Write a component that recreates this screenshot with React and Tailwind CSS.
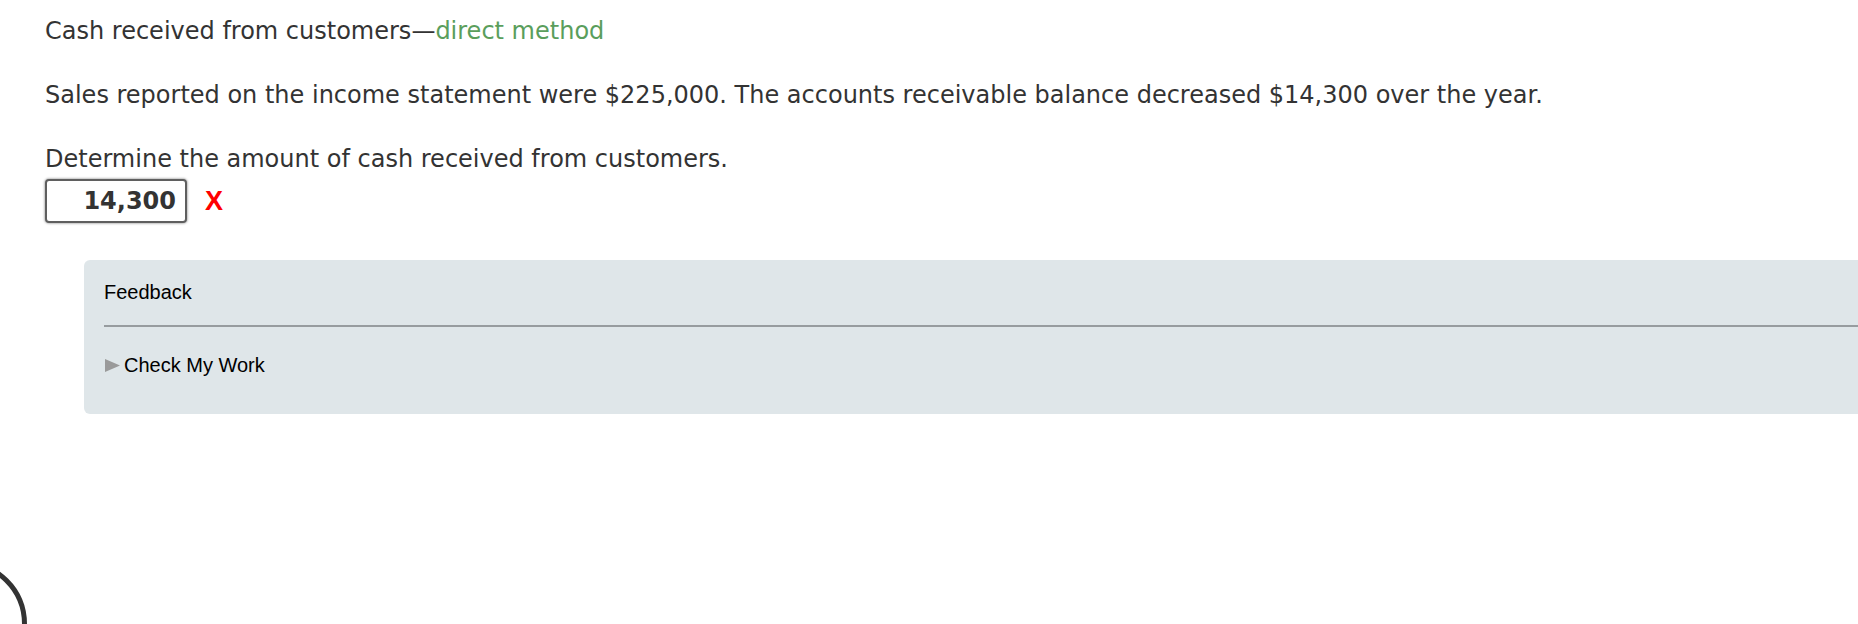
import React from 'react';

const Feedback = () => (
  <div className="ml-[39px] mt-[37px] w-[1800px] shrink-0 rounded-[6px] bg-[#dfe6e9] pl-5 pr-5 pt-[21px] pb-[37px] font-['Liberation_Sans',Arial,sans-serif] text-[20px] leading-[23px] text-black">
    <div>Feedback</div>
    <div className="mt-[21px] h-[2px] bg-[#979c9f]" />
    <div className="mt-[27px] flex items-center">
      <svg width="15" height="13" viewBox="0 0 15 13" className="ml-[1px] mr-[4px] blur-[0.5px]">
        <polygon points="0,0 15,6.5 0,13" fill="#9a9a9a" />
      </svg>
      <span>Check My Work</span>
    </div>
  </div>
);

export default function App() {
  return (
    <div className="relative h-[624px] w-full overflow-hidden bg-white font-['DejaVu_Sans',Verdana,sans-serif] text-[24px] leading-[32px] text-[#333]">
      <div className="pl-[45px] pt-[15px]">
        <p className="mb-[32px]">
          Cash received from customers—<span className="text-[#5a9e5c]">direct method</span>
        </p>
        <p className="mb-[32px]">
          Sales reported on the income statement were $225,000. The accounts receivable balance decreased $14,300 over the year.
        </p>
        <p>Determine the amount of cash received from customers.</p>
        <div className="mt-[4px] flex items-center">
          <div className="flex h-[44px] w-[142px] items-center justify-end rounded-[4px] border-2 border-[#5f5f5f] bg-white pr-[9px] font-bold shadow-[0_0_2px_1px_rgba(0,0,0,0.25)]">
            14,300
          </div>
          <span className="ml-[18px] font-['Liberation_Sans',Arial,sans-serif] text-[27px] font-bold text-[#ff0000]">X</span>
        </div>
        <Feedback />
      </div>
      <div className="absolute left-[-101px] top-[560px] h-[128px] w-[128px] rounded-full border-[5px] border-[#333]" />
    </div>
  );
}
